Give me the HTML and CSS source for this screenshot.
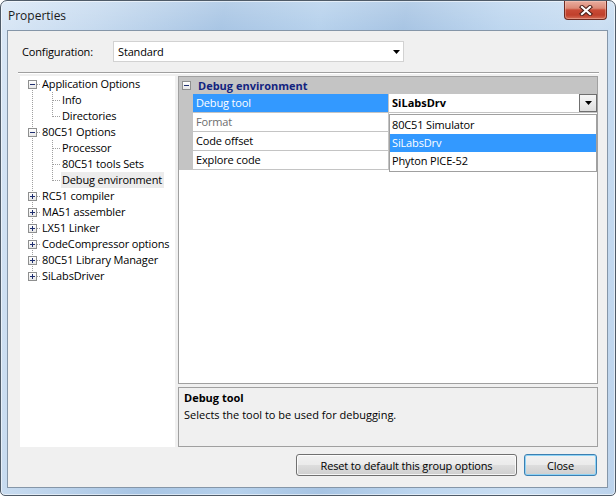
FILE: index.html
```html
<!DOCTYPE html>
<html>
<head>
<meta charset="utf-8">
<link rel="stylesheet" href="styles.css">
</head>
<body>
<div class="window">
  <div class="titlebar">
    <span class="title">Properties</span>
    <div class="close-btn">
      <svg width="14" height="11" viewBox="0 0 14 11">
        <path d="M3 2 L11 9 M11 2 L3 9" stroke="#4a1d16" stroke-width="4.2" stroke-linecap="square" fill="none"/>
        <path d="M3 2 L11 9 M11 2 L3 9" stroke="#ffffff" stroke-width="2.2" stroke-linecap="square" fill="none"/>
      </svg>
    </div>
  </div>
  <div class="client">
    <div class="config-row">
      <span class="config-label">Configuration:</span>
      <div class="combo">
        <span class="combo-text">Standard</span>
        <svg class="combo-arrow" width="7" height="4" viewBox="0 0 7 4"><path d="M0 0H7L3.5 4Z" fill="#000"/></svg>
      </div>
    </div>
    <div class="separator"></div>
    <div class="main">
      <div class="tree">
        <div class="trow"><span class="tc first"><span class="pm minus"></span></span><span class="tl">Application Options</span></div>
        <div class="trow"><span class="tc pass"></span><span class="tc tee"></span><span class="tl">Info</span></div>
        <div class="trow"><span class="tc pass"></span><span class="tc corner"></span><span class="tl">Directories</span></div>
        <div class="trow"><span class="tc mid"><span class="pm minus"></span></span><span class="tl">80C51 Options</span></div>
        <div class="trow"><span class="tc pass"></span><span class="tc tee"></span><span class="tl">Processor</span></div>
        <div class="trow"><span class="tc pass"></span><span class="tc tee"></span><span class="tl">80C51 tools Sets</span></div>
        <div class="trow"><span class="tc pass"></span><span class="tc corner"></span><span class="tl sel">Debug environment</span></div>
        <div class="trow"><span class="tc mid"><span class="pm plus"></span></span><span class="tl">RC51 compiler</span></div>
        <div class="trow"><span class="tc mid"><span class="pm plus"></span></span><span class="tl">MA51 assembler</span></div>
        <div class="trow"><span class="tc mid"><span class="pm plus"></span></span><span class="tl">LX51 Linker</span></div>
        <div class="trow"><span class="tc mid"><span class="pm plus"></span></span><span class="tl">CodeCompressor options</span></div>
        <div class="trow"><span class="tc mid"><span class="pm plus"></span></span><span class="tl">80C51 Library Manager</span></div>
        <div class="trow"><span class="tc last"><span class="pm plus"></span></span><span class="tl">SiLabsDriver</span></div>
      </div>
      <div class="right">
        <div class="pgrid">
          <div class="cat">
            <span class="pm minus cat-box"></span>
            <span class="cat-text">Debug environment</span>
          </div>
          <div class="prow">
            <span class="mg"></span>
            <span class="nm selected">Debug tool</span>
            <span class="vl vl-edit"><span class="vl-bold">SiLabsDrv</span>
              <span class="ddbtn"><svg width="7" height="4" viewBox="0 0 7 4"><path d="M0 0H7L3.5 4Z" fill="#000"/></svg></span>
            </span>
          </div>
          <div class="prow">
            <span class="mg"></span>
            <span class="nm readonly">Format</span>
            <span class="vl"></span>
          </div>
          <div class="prow">
            <span class="mg"></span>
            <span class="nm">Code offset</span>
            <span class="vl"></span>
          </div>
          <div class="prow">
            <span class="mg"></span>
            <span class="nm">Explore code</span>
            <span class="vl"></span>
          </div>
          <div class="ddlist">
            <div class="dd-item">80C51 Simulator</div>
            <div class="dd-item active">SiLabsDrv</div>
            <div class="dd-item">Phyton PICE-52</div>
          </div>
        </div>
        <div class="desc">
          <div class="desc-title">Debug tool</div>
          <div class="desc-text">Selects the tool to be used for debugging.</div>
        </div>
      </div>
    </div>
    <div class="buttons">
      <div class="btn btn-reset">Reset to default this group options</div>
      <div class="btn btn-close">Close</div>
    </div>
  </div>
</div>
</body>
</html>
```
FILE: styles.css
```css
* { box-sizing: border-box; }
html, body { margin: 0; padding: 0; }
body {
  width: 616px;
  height: 496px;
  overflow: hidden;
  font-family: "Open Sans", "Noto Sans", sans-serif;
  font-size: 11px;
  letter-spacing: -0.15px;
  color: #000;
  background: #fff;
}

.window {
  width: 616px;
  height: 496px;
  border: 1px solid #4f5b68;
  border-radius: 7px 7px 5px 5px;
  padding: 0 7px 7px 6px;
  display: flex;
  flex-direction: column;
  background:
    linear-gradient(to bottom, rgba(255,255,255,0.18), rgba(255,255,255,0) 30px),
    linear-gradient(100deg, #d9e7f6 0%, #c6daef 14%, #a8c5e4 32%, #b6d1ec 46%, #a7c4e3 58%, #bdd6ef 72%, #cadef2 86%, #bcd3ec 100%);
  box-shadow: inset 0 0 0 1px rgba(255,255,255,0.55);
}

.titlebar {
  height: 29px;
  display: flex;
  align-items: flex-start;
  justify-content: space-between;
}
.title {
  padding-left: 1px;
  line-height: 29px;
  font-size: 12px;
  letter-spacing: 0;
  color: #1a1a1a;
}
.close-btn {
  width: 43px;
  height: 19px;
  margin-right: 1px;
  border: 1px solid #6e2b22;
  border-top: none;
  border-radius: 0 0 4px 4px;
  background: linear-gradient(to bottom, #e9ad9f 0%, #dc8a77 40%, #c84a36 50%, #c0402c 78%, #d56d57 100%);
  box-shadow: inset 0 0 0 1px rgba(255,220,210,0.35);
  display: flex;
  align-items: center;
  justify-content: center;
}

.client {
  flex: 1;
  border: 1px solid #8596a8;
  background: #f0f0f0;
  display: flex;
  flex-direction: column;
}

.config-row {
  display: flex;
  align-items: center;
  height: 21px;
  margin-top: 10px;
  padding-left: 14px;
}
.config-label { width: 91px; }
.combo {
  width: 291px;
  height: 21px;
  border: 1px solid #d2d2d2;
  background: #fff;
  display: flex;
  align-items: center;
  padding-left: 4px;
  padding-right: 3px;
}
.combo-text { flex: 1; }

.separator {
  margin: 10px 8px 0 10px;
  height: 2px;
  border-top: 1px solid #a0a0a0;
  border-bottom: 1px solid #ffffff;
}

.main {
  display: flex;
  gap: 3px;
  margin: 2px 9px 0 12px;
  height: 371px;
}

.tree {
  width: 155px;
  background: #fff;
  padding-left: 1px;
}
.trow {
  display: flex;
  height: 16px;
  align-items: center;
}
.tc {
  width: 20px;
  height: 16px;
  flex-shrink: 0;
  display: flex;
  align-items: center;
  --dv: repeating-linear-gradient(to bottom, #a0a0a0 0 1px, transparent 1px 2px);
  --dh: repeating-linear-gradient(to right, #a0a0a0 0 1px, transparent 1px 2px);
}
.tc.pass { background: var(--dv) 11px 0 / 1px 16px no-repeat; }
.tc.tee { background: var(--dv) 11px 0 / 1px 16px no-repeat, var(--dh) 12px 8px / 8px 1px no-repeat; }
.tc.corner { background: var(--dv) 11px 0 / 1px 9px no-repeat, var(--dh) 12px 8px / 8px 1px no-repeat; }
.tc.first { background: var(--dv) 11px 8px / 1px 8px no-repeat, var(--dh) 12px 8px / 8px 1px no-repeat; }
.tc.mid { background: var(--dv) 11px 0 / 1px 16px no-repeat, var(--dh) 12px 8px / 8px 1px no-repeat; }
.tc.last { background: var(--dv) 11px 0 / 1px 9px no-repeat, var(--dh) 12px 8px / 8px 1px no-repeat; }

.pm {
  width: 9px;
  height: 9px;
  margin-left: 7px;
  border: 1px solid #8e8f8f;
  background-color: #fff;
}
.pm.minus {
  background: linear-gradient(#1f2f70, #1f2f70) center / 5px 1px no-repeat, linear-gradient(#ffffff, #e6e6e6);
}
.pm.plus {
  background: linear-gradient(#1f2f70, #1f2f70) center / 5px 1px no-repeat, linear-gradient(#1f2f70, #1f2f70) center / 1px 5px no-repeat, linear-gradient(#ffffff, #e6e6e6);
}

.tl {
  padding: 0 2px 0 1px;
  line-height: 16px;
  white-space: nowrap;
}
.tl.sel { background: #ececec; }

.right {
  flex: 1;
  display: flex;
  flex-direction: column;
  gap: 3px;
}
.pgrid {
  height: 308px;
  border: 1px solid #a0a0a0;
  background: #fff;
  position: relative;
}
.cat {
  height: 17px;
  background: #c4c4c4;
  display: flex;
  align-items: center;
}
.cat-box { margin-left: 3px; }
.cat-text {
  margin-left: 7px;
  font-weight: bold;
  letter-spacing: 0;
  color: #12237f;
}
.prow {
  display: flex;
  height: 19px;
}
.mg {
  width: 14px;
  background: #c4c4c4;
}
.nm {
  width: 196px;
  border-right: 1px solid #c4c4c4;
  border-bottom: 1px solid #c4c4c4;
  padding-left: 3px;
  line-height: 18px;
  white-space: nowrap;
}
.nm.selected { background: #3399ff; color: #fff; }
.nm.readonly { color: #6d6d6d; }
.vl {
  flex: 1;
  border-bottom: 1px solid #c4c4c4;
  padding-left: 3px;
  line-height: 18px;
  display: flex;
}
.vl-bold { font-weight: bold; letter-spacing: 0; flex: 1; }
.ddbtn {
  width: 18px;
  height: 18px;
  border: 1px solid #6f6f6f;
  background: linear-gradient(#f7f7f7, #dedede);
  display: flex;
  align-items: center;
  justify-content: center;
}

.ddlist {
  position: absolute;
  left: 210px;
  top: 37px;
  width: 208px;
  height: 58px;
  border: 1px solid #a0a0a0;
  background: #fff;
  padding-top: 1px;
}
.dd-item {
  height: 18px;
  line-height: 18px;
  padding-left: 2px;
  white-space: nowrap;
}
.dd-item.active { background: #3399ff; color: #fff; }

.desc {
  height: 60px;
  border: 1px solid #a0a0a0;
  background: #f0f0f0;
  padding: 2px 5px;
}
.desc-title { font-weight: bold; letter-spacing: 0; line-height: 16px; }
.desc-text { line-height: 18px; letter-spacing: 0; }

.buttons {
  display: flex;
  justify-content: flex-end;
  gap: 7px;
  margin-top: 7px;
  padding-right: 10px;
}
.btn {
  height: 22px;
  border: 1px solid #707070;
  border-radius: 3px;
  background: linear-gradient(to bottom, #f2f2f2 0%, #ebebeb 48%, #dddddd 52%, #cfcfcf 100%);
  box-shadow: inset 0 0 0 1px rgba(255,255,255,0.8);
  display: flex;
  align-items: center;
  justify-content: center;
  white-space: nowrap;
}
.btn-reset { width: 221px; }
.btn-close {
  width: 73px;
  border-color: #3c7fb1;
  box-shadow: inset 0 0 0 1px #8fd3f5;
}
```
